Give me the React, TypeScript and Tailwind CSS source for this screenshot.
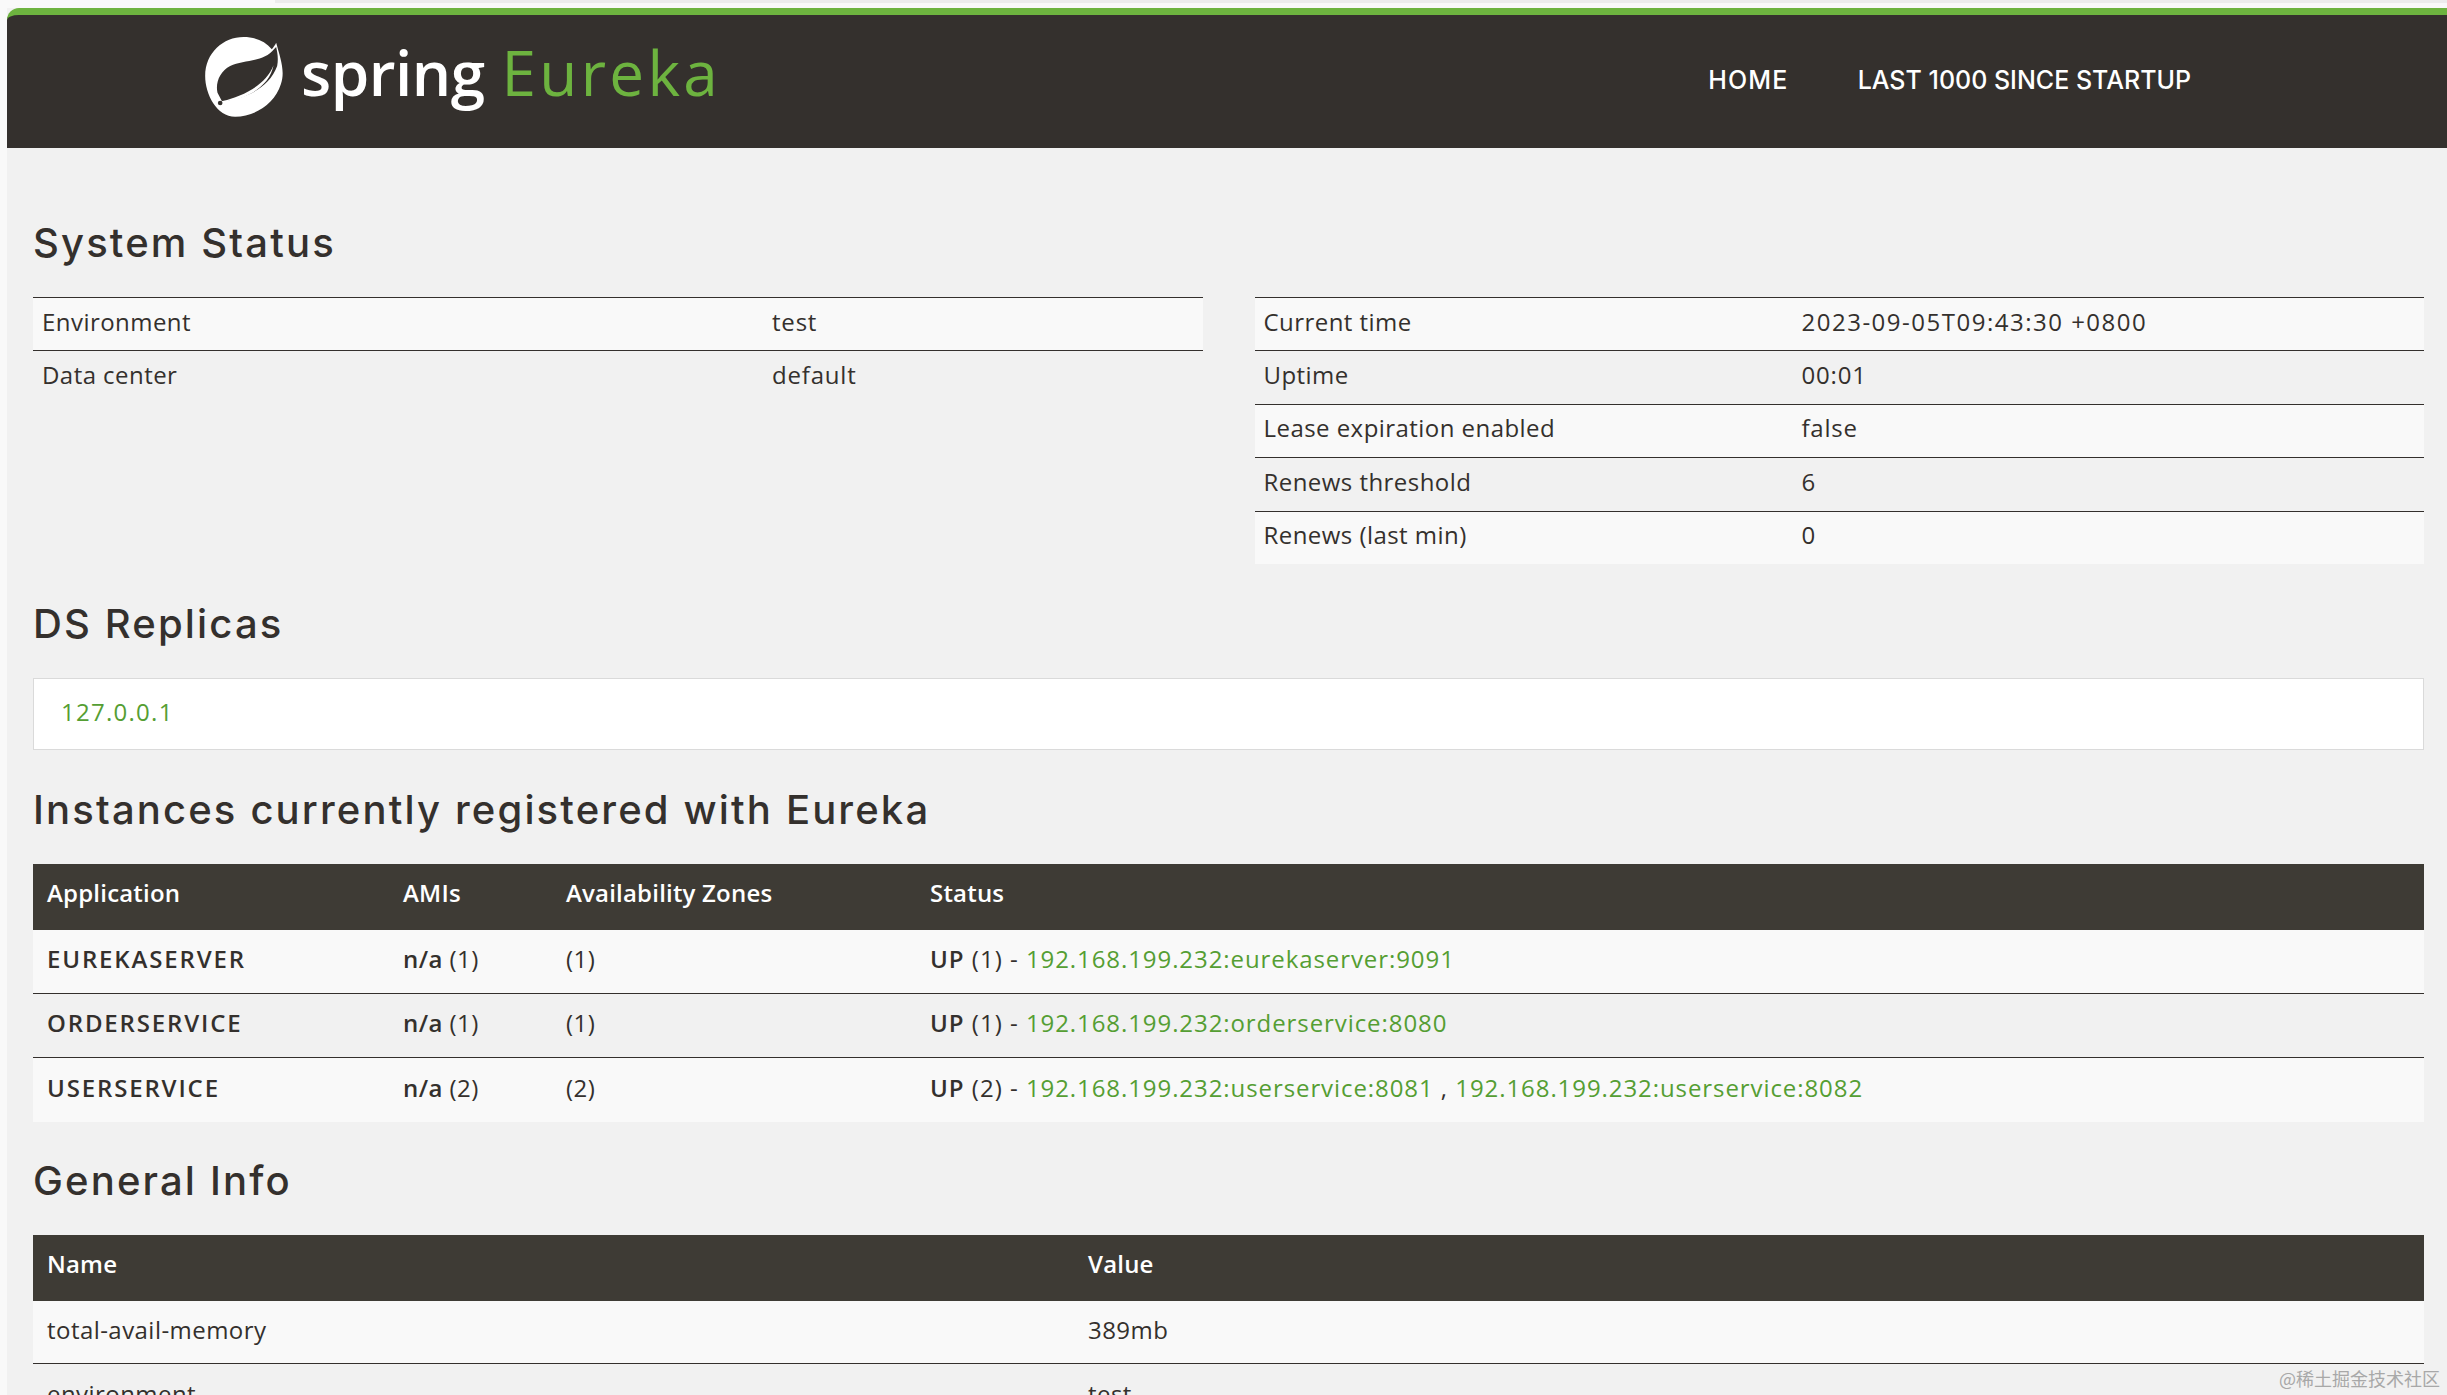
const systemLeft = [
  ["Environment", "test"],
  ["Data center", "default"],
];

const systemRight = [
  ["Current time", "2023-09-05T09:43:30 +0800"],
  ["Uptime", "00:01"],
  ["Lease expiration enabled", "false"],
  ["Renews threshold", "6"],
  ["Renews (last min)", "0"],
];

const instances = [
  { app: "EUREKASERVER", count: 1, links: ["192.168.199.232:eurekaserver:9091"] },
  { app: "ORDERSERVICE", count: 1, links: ["192.168.199.232:orderservice:8080"] },
  { app: "USERSERVICE", count: 2, links: ["192.168.199.232:userservice:8081", "192.168.199.232:userservice:8082"] },
];

const SpringLeaf = () => (
  <svg viewBox="75 48 236 240" className="h-[80px] w-[79px] shrink-0">
    <path
      d="M288 65C300 110 316 150 302 190C284 250 222 287 165 287C110 287 75 220 75 165C75 95 130 48 190 48C225 48 255 60 275 85C280 78 285 72 288 65Z"
      fill="#ffffff"
    />
    <path
      d="M282 84C250 125 190 115 150 135C120 150 105 185 112 215L125 240C190 235 265 205 291 135C295 115 292 95 288 78Z"
      fill="#34302d"
    />
    <path d="M125 241C190 225 258 192 280 133C268 200 190 240 125 241Z" fill="#ffffff" />
    <circle cx="120" cy="246" r="7" fill="#34302d" />
  </svg>
);

const SectionTitle = ({ children, className }: { children: string; className: string }) => (
  <h1 className={`font-['Inter',sans-serif] text-[40px] leading-[46px] font-medium tracking-[2.15px] text-[#34302d] ${className}`}>{children}</h1>
);

const StatusTable = ({ rows, labelWidth }: { rows: string[][]; labelWidth: string }) => (
  <div className="flex flex-1 flex-col">
    {rows.map(([label, value], i) => (
      <div
        key={label}
        className={`flex h-[53.4px] items-center border-t border-[#34302d] px-[9px] pb-[5px] ${i % 2 === 0 ? "bg-[#f9f9f9]" : ""}`}
      >
        <span className={`${labelWidth} shrink-0`}>{label}</span>
        <span className={label === "Current time" ? "tracking-[1.5px]" : "tracking-[0.8px]"}>{value}</span>
      </div>
    ))}
  </div>
);

const App = () => {
  return (
    <div className="relative h-[1395px] w-[2447px] overflow-hidden bg-[#f9f9f9] pl-[7px] font-['Open_Sans',sans-serif] text-[24px] tracking-[0.45px] text-[#34302d]">
      <div className="mb-[5px] ml-[268px] h-[3px] bg-[#ececec]" />
      <div className="flex h-full flex-col bg-[#f1f1f1]">
        <nav className="flex h-[140px] shrink-0 items-center rounded-tl-[12px] border-t-[7px] border-[#6db33f] bg-[#34302d] pr-[256px] pb-[10px] pl-[198px]">
          <SpringLeaf />
          <span className="mb-[10px] ml-[17px] text-[62px] leading-none font-semibold tracking-[-0.5px] text-white">spring</span>
          <span className="mb-[10px] ml-[17px] text-[62px] leading-none tracking-[3.3px] text-[#6db33f]">Eureka</span>
          <div className="mt-[9px] ml-auto flex gap-[69px] font-['Inter',sans-serif] text-[25px] font-medium tracking-[0px] text-white">
            <a className="tracking-[1.2px]">HOME</a>
            <a>LAST 1000 SINCE STARTUP</a>
          </div>
        </nav>

        <main className="pr-[23px] pl-[26px]">
          <SectionTitle className="mt-[72px] mb-[31px]">System Status</SectionTitle>
          <div className="flex items-start gap-[52px]">
            <StatusTable rows={systemLeft} labelWidth="w-[730px]" />
            <StatusTable rows={systemRight} labelWidth="w-[538px]" />
          </div>

          <SectionTitle className="mt-[37px] mb-[31px]">DS Replicas</SectionTitle>
          <div className="flex h-[72px] items-center border border-[#dadada] bg-white px-[27px] pb-[3px] tracking-[1.27px] text-[#559e33]">127.0.0.1</div>

          <SectionTitle className="mt-[37px] mb-[31px]">Instances currently registered with Eureka</SectionTitle>
          <table className="w-full table-fixed border-collapse">
            <thead>
              <tr className="h-[66px] bg-[#3e3b35] text-left tracking-[0.2px] text-white">
                <th className="w-[356px] pb-[7px] pl-[14px] font-semibold">Application</th>
                <th className="w-[163px] pb-[7px] pl-[14px] font-semibold">AMIs</th>
                <th className="w-[364px] pb-[7px] pl-[14px] font-semibold">Availability Zones</th>
                <th className="pb-[7px] pl-[14px] font-semibold">Status</th>
              </tr>
            </thead>
            <tbody>
              {instances.map((row, i) => (
                <tr key={row.app} className={`h-[64px] ${i > 0 ? "border-t border-[#34302d]" : ""} ${i % 2 === 0 ? "bg-[#f9f9f9]" : ""}`}>
                  <td className="pb-[5px] pl-[14px] font-semibold tracking-[1.85px]">{row.app}</td>
                  <td className="pb-[5px] pl-[14px]">
                    <b className="font-semibold">n/a</b> ({row.count})
                  </td>
                  <td className="pb-[5px] pl-[14px]">({row.count})</td>
                  <td className="pb-[5px] pl-[14px] tracking-[1px]">
                    <b className="font-semibold">UP</b> ({row.count}) -{" "}
                    {row.links.map((link, j) => (
                      <span key={link}>
                        {j > 0 && " , "}
                        <a className="tracking-[0.92px] text-[#559e33]">{link}</a>
                      </span>
                    ))}
                  </td>
                </tr>
              ))}
            </tbody>
          </table>

          <SectionTitle className="mt-[36px] mb-[31px]">General Info</SectionTitle>
          <table className="w-full table-fixed border-collapse">
            <thead>
              <tr className="h-[66px] bg-[#3e3b35] text-left tracking-[0.2px] text-white">
                <th className="w-[1041px] pb-[7px] pl-[14px] font-semibold">Name</th>
                <th className="pb-[7px] pl-[14px] font-semibold">Value</th>
              </tr>
            </thead>
            <tbody>
              <tr className="h-[63px] bg-[#f9f9f9]">
                <td className="pb-[4px] pl-[14px]">total-avail-memory</td>
                <td className="pb-[4px] pl-[14px]">389mb</td>
              </tr>
              <tr className="h-[63px] border-t border-[#34302d]">
                <td className="pb-[4px] pl-[14px]">environment</td>
                <td className="pb-[4px] pl-[14px]">test</td>
              </tr>
            </tbody>
          </table>
        </main>
      </div>
      <span className="absolute right-[7px] bottom-[7px] font-['Noto_Sans_CJK_SC',sans-serif] text-[18px] leading-[20px] tracking-normal text-[#a8a8a8]">
        @稀土掘金技术社区
      </span>
    </div>
  );
};

export default App;
